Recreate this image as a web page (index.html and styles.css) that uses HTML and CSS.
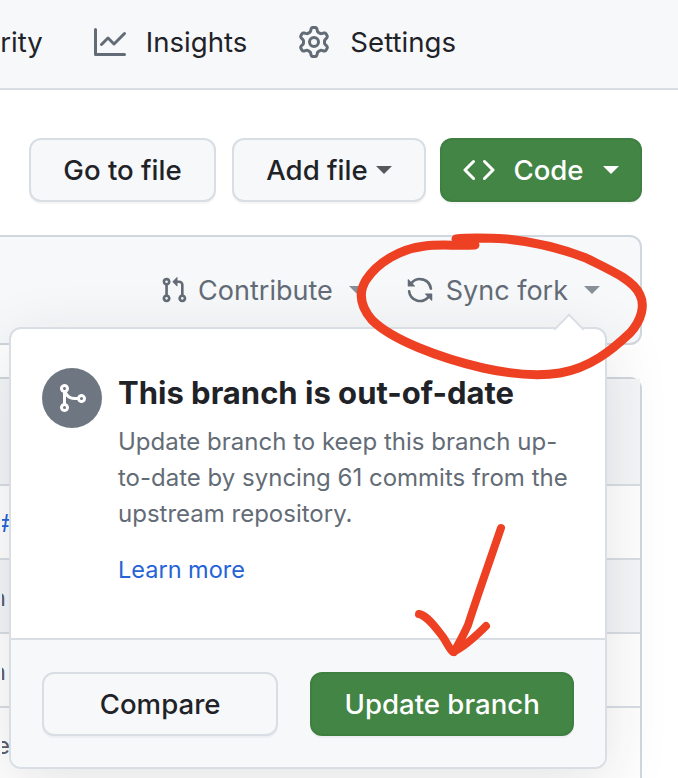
FILE: index.html
```html
<!DOCTYPE html>
<html lang="en">
<head>
  <meta charset="UTF-8" />
  <meta name="viewport" content="width=device-width, initial-scale=1.0"/>
  <title>Sync fork</title>
  <link rel="stylesheet" href="styles.css">
</head>
<body>
  <nav class="repo-nav">
    <a class="tab">Security</a>
    <a class="tab">
      <svg class="icon tab-icon" viewBox="0 0 16 16"><path d="M1.5 1.75V13.5h13.75a.75.75 0 0 1 0 1.5H.75a.75.75 0 0 1-.75-.75V1.75a.75.75 0 0 1 1.5 0Zm14.28 2.53-5.25 5.25a.75.75 0 0 1-1.06 0L7 7.06 4.28 9.78a.751.751 0 0 1-1.042-.018.751.751 0 0 1-.018-1.042l3.25-3.25a.75.75 0 0 1 1.06 0L10 7.94l4.72-4.72a.751.751 0 0 1 1.042.018.751.751 0 0 1 .018 1.042Z"/></svg>
      Insights
    </a>
    <a class="tab">
      <svg class="icon tab-icon" viewBox="0 0 16 16"><path d="M8 0a8.2 8.2 0 0 1 .701.031C9.444.095 9.99.645 10.16 1.29l.288 1.107c.018.066.079.158.212.224.231.114.454.243.668.386.123.082.233.09.299.071l1.103-.303c.644-.176 1.392.021 1.82.63.27.385.506.792.704 1.218.315.675.111 1.422-.364 1.891l-.814.806c-.049.048-.098.147-.088.294.016.257.016.515 0 .772-.01.147.038.246.088.294l.814.806c.475.469.679 1.216.364 1.891a7.977 7.977 0 0 1-.704 1.217c-.428.61-1.176.807-1.82.63l-1.102-.302c-.067-.019-.177-.011-.3.071a5.909 5.909 0 0 1-.668.386c-.133.066-.194.158-.211.224l-.29 1.106c-.168.646-.715 1.196-1.458 1.26a8.006 8.006 0 0 1-1.402 0c-.743-.064-1.289-.614-1.458-1.26l-.289-1.106c-.018-.066-.079-.158-.212-.224a5.738 5.738 0 0 1-.668-.386c-.123-.082-.233-.09-.299-.071l-1.103.303c-.644.176-1.392-.021-1.82-.63a8.12 8.12 0 0 1-.704-1.218c-.315-.675-.111-1.422.363-1.891l.815-.806c.05-.048.098-.147.088-.294a6.214 6.214 0 0 1 0-.772c.01-.147-.038-.246-.088-.294l-.815-.806C.635 6.045.431 5.298.746 4.623a7.92 7.92 0 0 1 .704-1.217c.428-.61 1.176-.807 1.82-.63l1.102.302c.067.019.177.011.3-.071.214-.143.437-.272.668-.386.133-.066.194-.158.211-.224l.29-1.106C6.009.645 6.556.095 7.299.03 7.53.01 7.764 0 8 0Zm-.571 1.525c-.036.003-.108.036-.137.146l-.289 1.105c-.147.561-.549.967-.998 1.189-.173.086-.34.183-.5.29-.417.278-.97.423-1.529.27l-1.103-.303c-.109-.03-.175.016-.195.045-.22.312-.412.644-.573.99-.014.031-.021.11.059.19l.815.806c.411.406.562.957.53 1.456a4.709 4.709 0 0 0 0 .582c.032.499-.119 1.05-.53 1.456l-.815.806c-.081.08-.073.159-.059.19.162.346.353.677.573.989.02.03.085.076.195.046l1.102-.303c.56-.153 1.113-.008 1.53.27.161.107.328.204.501.29.447.222.85.629.997 1.189l.289 1.105c.029.109.101.143.137.146a6.6 6.6 0 0 0 1.142 0c.036-.003.108-.036.137-.146l.289-1.105c.147-.561.549-.967.998-1.189.173-.086.34-.183.5-.29.417-.278.97-.423 1.529-.27l1.103.303c.109.029.175-.016.195-.045.22-.313.411-.644.573-.99.014-.031.021-.11-.059-.19l-.815-.806c-.411-.406-.562-.957-.53-1.456a4.709 4.709 0 0 0 0-.582c-.032-.499.119-1.05.53-1.456l.815-.806c.081-.08.073-.159.059-.19a6.464 6.464 0 0 0-.573-.989c-.02-.03-.085-.076-.195-.046l-1.102.303c-.56.153-1.113.008-1.53-.27a4.44 4.44 0 0 0-.501-.29c-.447-.222-.85-.629-.997-1.189l-.289-1.105c-.029-.11-.101-.143-.137-.146a6.6 6.6 0 0 0-1.142 0ZM11 8a3 3 0 1 1-6 0 3 3 0 0 1 6 0ZM9.5 8a1.5 1.5 0 1 0-3.001.001A1.5 1.5 0 0 0 9.5 8Z"/></svg>
      Settings
    </a>
  </nav>

  <main class="repo-main">
    <div class="actions">
      <button class="btn btn-go">Go to file</button>
      <button class="btn btn-add">Add file <span class="caret"></span></button>
      <button class="btn btn-green btn-code">
        <svg class="icon code-icon" viewBox="0 0 16 16"><path d="m11.28 3.22 4.25 4.25a.75.75 0 0 1 0 1.06l-4.25 4.25a.749.749 0 0 1-1.275-.326.749.749 0 0 1 .215-.734L13.94 8l-3.72-3.72a.749.749 0 0 1 .326-1.275.749.749 0 0 1 .734.215Zm-6.56 0a.751.751 0 0 1 1.042.018.751.751 0 0 1 .018 1.042L2.06 8l3.72 3.72a.749.749 0 0 1-.326 1.275.749.749 0 0 1-.734-.215L.47 8.53a.75.75 0 0 1 0-1.06Z"/></svg>
        Code <span class="caret caret-white"></span>
      </button>
    </div>

    <div class="branch-bar">
      <span class="bar-item bar-contribute">
        <svg class="icon bar-icon" viewBox="0 0 16 16"><path d="M1.5 3.25a2.25 2.25 0 1 1 3 2.122v5.256a2.251 2.251 0 1 1-1.5 0V5.372A2.25 2.25 0 0 1 1.5 3.25Zm5.677-.177L9.573.677A.25.25 0 0 1 10 .854V2.5h1A2.5 2.5 0 0 1 13.5 5v5.628a2.251 2.251 0 1 1-1.5 0V5a1 1 0 0 0-1-1h-1v1.646a.25.25 0 0 1-.427.177L7.177 3.427a.25.25 0 0 1 0-.354ZM3.75 2.5a.75.75 0 1 0 0 1.5.75.75 0 0 0 0-1.5Zm0 9.5a.75.75 0 1 0 0 1.5.75.75 0 0 0 0-1.5Zm8.25.75a.75.75 0 1 0 1.5 0 .75.75 0 0 0-1.5 0Z"/></svg>
        Contribute <span class="caret"></span>
      </span>
      <span class="bar-item bar-sync">
        <svg class="icon bar-icon" viewBox="0 0 16 16"><path d="M1.705 8.005a.75.75 0 0 1 .834.656 5.5 5.5 0 0 0 9.592 2.97l-1.204-1.204a.25.25 0 0 1 .177-.427h3.646a.25.25 0 0 1 .25.25v3.646a.25.25 0 0 1-.427.177l-1.38-1.38A7.002 7.002 0 0 1 1.05 8.84a.75.75 0 0 1 .656-.834ZM8 2.5a5.487 5.487 0 0 0-4.131 1.869l1.204 1.204A.25.25 0 0 1 4.896 6H1.25A.25.25 0 0 1 1 5.75V2.104a.25.25 0 0 1 .427-.177l1.38 1.38A7.002 7.002 0 0 1 14.95 7.16a.75.75 0 0 1-1.49.178A5.5 5.5 0 0 0 8 2.5Z"/></svg>
        Sync fork <span class="caret caret-sync"></span>
      </span>
    </div>

    <div class="file-table">
      <div class="file-row file-head"></div>
      <div class="file-row"><span class="file-cell file-link">#</span></div>
      <div class="file-row file-hover"><span class="file-cell file-cell-cut">n</span></div>
      <div class="file-row"><span class="file-cell file-cell-cut">n</span></div>
      <div class="file-row"><span class="file-cell">e</span></div>
    </div>
  </main>

  <section class="popover">
    <span class="popover-arrow"></span>
    <div class="popover-body">
      <span class="merge-badge">
        <svg class="icon merge-icon" viewBox="0 0 16 16"><path d="M5.45 5.154A4.25 4.25 0 0 0 9.25 7.5h1.378a2.251 2.251 0 1 1 0 1.5H9.25A5.734 5.734 0 0 1 5 7.123v3.505a2.25 2.25 0 1 1-1.5 0V5.372a2.25 2.25 0 1 1 1.95-.218ZM4.25 13.5a.75.75 0 1 0 0-1.5.75.75 0 0 0 0 1.5Zm8.5-4.5a.75.75 0 1 0 0-1.5.75.75 0 0 0 0 1.5ZM5 3.25a.75.75 0 1 0 0 .005V3.25Z"/></svg>
      </span>
      <div class="popover-text">
        <h2>This branch is out-of-date</h2>
        <p>Update branch to keep this branch up-<br>to-date by syncing 61 commits from the<br>upstream repository.</p>
        <a class="learn-more">Learn more</a>
      </div>
    </div>
    <div class="popover-foot">
      <button class="btn btn-compare">Compare</button>
      <button class="btn btn-green btn-update">Update branch</button>
    </div>
  </section>

  <!-- hand drawn red marks on top of the screenshot -->
  <svg class="scribble" viewBox="0 0 678 778">
    <path class="scribble-circle" d="M475 245 C455 246 440 244 425 246 C400 249 378 262 366 280 C358 293 360 306 372 320 C392 340 440 358 483 368 C510 374 535 377 560 373 C590 368 612 350 630 333 C642 320 645 305 640 295 C634 280 610 270 586 258 C560 248 535 242 507 239 C490 238 472 237 456 239"/>
    <path class="scribble-arrow" d="M501 528 C490 560 476 600 468 625 C463 636 458 645 454 652"/>
    <path class="scribble-arrow" d="M419 614 C428 616 436 628 443 637 C447 643 450 650 453 652 C462 648 476 636 486 626"/>
  </svg>
</body>
</html>
```

FILE: styles.css
```css
:root {
  --canvas-subtle: #f6f8fa;
  --row-shade: #f4f6f8;
  --border: #d8dee4;
  --text: #1f2328;
  --muted: #636c76;
  --green: #428545;
  --link: #2563d6;
  --red: #ee4023;
}

html, body {
  height: 778px;
}

body {
  margin: 0;
  position: relative;
  overflow: hidden;
  background-color: #ffffff;
  color: var(--text);
  font-family: Inter, "Noto Sans", sans-serif;
}

.icon {
  display: block;
  flex: none;
  fill: currentColor;
}

/* top nav */
.repo-nav {
  height: 88px;
  display: flex;
  justify-content: flex-end;
  align-items: center;
  gap: 51px;
  padding-right: 222px;
  overflow: hidden;
  background-color: var(--canvas-subtle);
  border-bottom: 2px solid var(--border);
  font-size: 27.6px;
}

.tab {
  display: flex;
  align-items: center;
  gap: 20px;
  flex: none;
  position: relative;
  top: -2px;
}

.tab-icon {
  width: 32px;
  height: 32px;
  color: var(--muted);
}

/* buttons */
.repo-main {
  padding: 48px 36px 0 0;
}

.actions {
  display: flex;
  justify-content: flex-end;
  gap: 16px;
  margin-bottom: 33px;
}

.btn {
  height: 64px;
  padding: 0;
  box-sizing: border-box;
  display: flex;
  justify-content: center;
  align-items: center;
  border: 2px solid var(--border);
  border-radius: 12px;
  background-color: var(--canvas-subtle);
  box-shadow: 0 2px 0 rgba(31, 35, 40, 0.04);
  color: var(--text);
  font-family: inherit;
  font-size: 27.6px;
  font-weight: 500;
}

.btn-go { width: 187px; }
.btn-add { width: 194px; gap: 8px; }
.btn-code { width: 202px; margin-left: -2px; gap: 18px; }
.btn-compare { flex: 236; }
.btn-update { flex: 264; }

.btn-green {
  background-color: var(--green);
  border-color: #3f7f42;
  color: #ffffff;
}

.code-icon {
  width: 32px;
  height: 32px;
}

.caret {
  display: inline-block;
  width: 0;
  height: 0;
  border-style: solid;
  border-width: 8px 8px 0;
  border-color: currentColor transparent transparent;
  opacity: 0.75;
}

.caret-white {
  opacity: 1;
  margin-left: 1px;
}

/* contribute / sync bar */
.branch-bar {
  height: 110px;
  box-sizing: border-box;
  margin-left: -20px;
  margin-bottom: 32px;
  padding-right: 40px;
  display: flex;
  justify-content: flex-end;
  align-items: center;
  gap: 41px;
  background-color: var(--canvas-subtle);
  border: 2px solid #d0d7de;
  border-radius: 12px;
  color: var(--muted);
  font-size: 27px;
}

.bar-item {
  display: flex;
  align-items: center;
  gap: 10px;
}

.bar-sync {
  gap: 12px;
}

.bar-icon {
  width: 28px;
  height: 28px;
}

.bar-contribute .caret {
  margin-left: 6px;
}

.caret-sync {
  margin-left: 4px;
  color: var(--muted);
}

/* file list behind the popover */
.file-table {
  margin-left: -20px;
  border: 2px solid #d0d7de;
  border-radius: 12px 12px 0 0;
}

.file-row {
  height: 74px;
  display: flex;
  align-items: center;
  padding: 3px 0 0 20px;
  box-sizing: border-box;
  border-top: 2px solid var(--border);
  font-size: 24px;
  color: #57606a;
}

.file-head {
  height: 105px;
  border-top: 0;
  background-color: var(--row-shade);
}

.file-hover {
  background-color: var(--row-shade);
}

.file-cell {
  width: 8px;
  overflow: hidden;
  display: flex;
  justify-content: flex-end;
}

.file-cell-cut {
  width: 4px;
}

.file-link {
  color: var(--link);
}

/* popover */
.popover {
  position: absolute;
  left: 9px;
  top: 327px;
  width: 598px;
  height: 442px;
  box-sizing: border-box;
  display: flex;
  flex-direction: column;
  background-color: #ffffff;
  border: 2px solid var(--border);
  border-radius: 12px;
  box-shadow: 0 16px 64px rgba(31, 35, 40, 0.12);
}

.popover-arrow {
  position: absolute;
  right: 25px;
  top: -11px;
  width: 20px;
  height: 20px;
  background-color: #ffffff;
  border-top: 2px solid var(--border);
  border-left: 2px solid var(--border);
  transform: rotate(45deg);
}

.popover-body {
  flex: 1;
  display: flex;
  gap: 16px;
  padding: 39px 31px 0;
}

.merge-badge {
  width: 60px;
  height: 60px;
  flex: none;
  display: flex;
  justify-content: center;
  align-items: center;
  border-radius: 50%;
  background-color: #6e7781;
  color: #ffffff;
}

.merge-icon {
  width: 32px;
  height: 32px;
}

.popover-text h2 {
  margin: 5px 0 0;
  font-size: 31px;
  line-height: 40px;
  font-weight: 700;
}

.popover-text p {
  margin: 11px 0 0;
  font-size: 24px;
  line-height: 36px;
  color: var(--muted);
}

.learn-more {
  display: block;
  margin-top: 20px;
  font-size: 23.5px;
  line-height: 36px;
  color: var(--link);
}

.popover-foot {
  height: 129px;
  box-sizing: border-box;
  display: flex;
  gap: 32px;
  padding: 32px 31px 0;
  background-color: var(--canvas-subtle);
  border-top: 2px solid var(--border);
  border-radius: 0 0 10px 10px;
}

/* annotation */
.scribble {
  position: absolute;
  left: 0;
  top: 0;
  width: 678px;
  height: 778px;
  pointer-events: none;
}

.scribble path {
  fill: none;
  stroke: var(--red);
  stroke-linecap: round;
  stroke-linejoin: round;
}

.scribble-circle {
  stroke-width: 9;
}

.scribble-arrow {
  stroke-width: 8;
}
```
